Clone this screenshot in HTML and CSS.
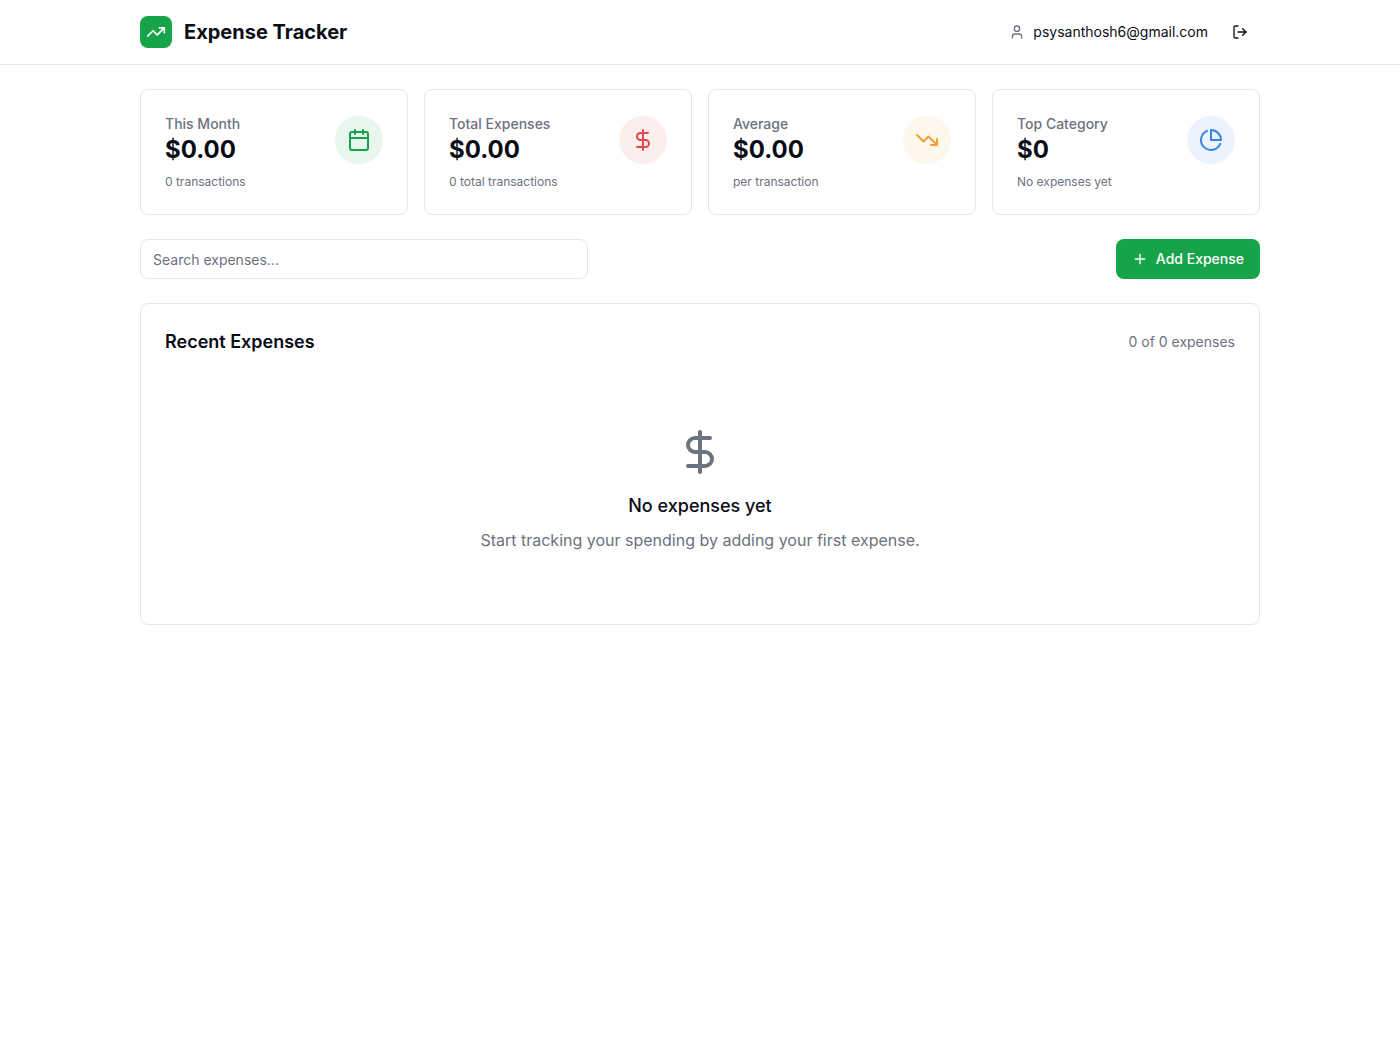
FILE: index.html
```html
<!DOCTYPE html>
<html lang="en">
<head>
<meta charset="utf-8">
<title>Expense Tracker</title>
<link rel="stylesheet" href="styles.css">
</head>
<body>
<header class="header">
  <div class="header-inner">
    <div class="brand">
      <div class="logo">
        <svg class="icon-20" viewBox="0 0 24 24"><polyline points="22 7 13.5 15.5 8.5 10.5 2 17"/><polyline points="16 7 22 7 22 13"/></svg>
      </div>
      <h1 class="title">Expense Tracker</h1>
    </div>
    <div class="user">
      <svg class="icon-16 muted-icon" viewBox="0 0 24 24"><path d="M19 21v-2a4 4 0 0 0-4-4H9a4 4 0 0 0-4 4v2"/><circle cx="12" cy="7" r="4"/></svg>
      <span class="email">psysanthosh6@gmail.com</span>
      <button class="logout" aria-label="Log out">
        <svg class="icon-16" viewBox="0 0 24 24"><path d="M9 21H5a2 2 0 0 1-2-2V5a2 2 0 0 1 2-2h4"/><polyline points="16 17 21 12 16 7"/><line x1="21" y1="12" x2="9" y2="12"/></svg>
      </button>
    </div>
  </div>
</header>
<main class="main">
  <section class="stats">
    <article class="card">
      <div class="card-text">
        <p class="label">This Month</p>
        <p class="value">$0.00</p>
        <p class="note">0 transactions</p>
      </div>
      <div class="badge badge-green">
        <svg class="icon-24" viewBox="0 0 24 24"><rect x="3" y="4" width="18" height="18" rx="2"/><line x1="16" y1="2" x2="16" y2="6"/><line x1="8" y1="2" x2="8" y2="6"/><line x1="3" y1="10" x2="21" y2="10"/></svg>
      </div>
    </article>
    <article class="card">
      <div class="card-text">
        <p class="label">Total Expenses</p>
        <p class="value">$0.00</p>
        <p class="note">0 total transactions</p>
      </div>
      <div class="badge badge-red">
        <svg class="icon-24" viewBox="0 0 24 24"><line x1="12" y1="2" x2="12" y2="22"/><path d="M17 5H9.5a3.5 3.5 0 0 0 0 7h5a3.5 3.5 0 0 1 0 7H6"/></svg>
      </div>
    </article>
    <article class="card">
      <div class="card-text">
        <p class="label">Average</p>
        <p class="value">$0.00</p>
        <p class="note">per transaction</p>
      </div>
      <div class="badge badge-amber">
        <svg class="icon-24" viewBox="0 0 24 24"><polyline points="22 17 13.5 8.5 8.5 13.5 2 7"/><polyline points="16 17 22 17 22 11"/></svg>
      </div>
    </article>
    <article class="card">
      <div class="card-text">
        <p class="label">Top Category</p>
        <p class="value">$0</p>
        <p class="note">No expenses yet</p>
      </div>
      <div class="badge badge-blue">
        <svg class="icon-24" viewBox="0 0 24 24"><path d="M21.21 15.89A10 10 0 1 1 8 2.83"/><path d="M22 12A10 10 0 0 0 12 2v10z"/></svg>
      </div>
    </article>
  </section>
  <section class="toolbar">
    <input class="search" type="text" placeholder="Search expenses...">
    <button class="add">
      <svg class="icon-16" viewBox="0 0 24 24"><path d="M5 12h14"/><path d="M12 5v14"/></svg>
      <span>Add Expense</span>
    </button>
  </section>
  <section class="panel">
    <div class="panel-head">
      <h2 class="panel-title">Recent Expenses</h2>
      <span class="count">0 of 0 expenses</span>
    </div>
    <div class="empty">
      <svg class="icon-48" viewBox="0 0 24 24"><line x1="12" y1="2" x2="12" y2="22"/><path d="M17 5H9.5a3.5 3.5 0 0 0 0 7h5a3.5 3.5 0 0 1 0 7H6"/></svg>
      <h3 class="empty-title">No expenses yet</h3>
      <p class="empty-text">Start tracking your spending by adding your first expense.</p>
    </div>
  </section>
</main>
</body>
</html>
```
FILE: styles.css
```css
* { box-sizing: border-box; }
html, body { margin: 0; padding: 0; }
body {
  background: #fff;
  color: #0a0c16;
  font-family: Inter, "Liberation Sans", sans-serif;
  font-size: 16px;
  line-height: 24px;
}
h1, h2, h3, p { margin: 0; }
svg {
  fill: none;
  stroke: currentColor;
  stroke-width: 2;
  stroke-linecap: round;
  stroke-linejoin: round;
  flex: none;
  display: block;
}
.icon-16 { width: 16px; height: 16px; }
.icon-20 { width: 20px; height: 20px; }
.icon-24 { width: 24px; height: 24px; }
.icon-48 { width: 48px; height: 48px; }

.header { border-bottom: 1px solid #e5e7eb; height: 65px; }
.header-inner {
  width: 1120px;
  height: 64px;
  margin: 0 auto;
  display: flex;
  align-items: center;
  justify-content: space-between;
}
.brand { display: flex; align-items: center; gap: 12px; }
.logo {
  width: 32px;
  height: 32px;
  border-radius: 8px;
  background: #16a34a;
  color: #fff;
  display: flex;
  align-items: center;
  justify-content: center;
}
.title { font-size: 20px; line-height: 28px; font-weight: 700; }
.user { display: flex; align-items: center; }
.muted-icon { color: #6b7280; }
.email { font-size: 14px; line-height: 20px; margin-left: 8px; }
.logout {
  width: 40px;
  height: 40px;
  margin-left: 12px;
  border: 0;
  background: none;
  color: inherit;
  padding: 0;
  display: flex;
  align-items: center;
  justify-content: center;
}

.main { width: 1120px; margin: 0 auto; padding-top: 24px; }
.stats { display: grid; grid-template-columns: repeat(4, 1fr); gap: 16px; }
.card {
  height: 126px;
  border: 1px solid #e5e7eb;
  border-radius: 8px;
  padding: 24px;
  display: flex;
  justify-content: space-between;
  align-items: flex-start;
}
.label { font-size: 14px; line-height: 20px; font-weight: 500; color: #6b7280; }
.value { font-size: 24px; line-height: 32px; font-weight: 700; }
.note { font-size: 12px; line-height: 16px; color: #6b7280; margin-top: 8px; }
.badge {
  width: 48px;
  height: 48px;
  border-radius: 50%;
  display: flex;
  align-items: center;
  justify-content: center;
  margin-top: 2px;
}
.badge-green { background: #e8f6ed; color: #16a34a; }
.badge-red { background: #fdeeee; color: #e5484d; }
.badge-amber { background: #fef7ec; color: #efa231; }
.badge-blue { background: #ecf3fe; color: #3b82e6; }

.toolbar {
  display: flex;
  justify-content: space-between;
  align-items: center;
  margin-top: 24px;
}
.search {
  width: 448px;
  height: 40px;
  border: 1px solid #e5e7eb;
  border-radius: 8px;
  padding: 0 12px;
  font: 14px/20px Inter, "Liberation Sans", sans-serif;
  color: #0a0c16;
  background: #fff;
  outline: none;
}
.search::placeholder { color: #6b7280; opacity: 1; }
.add {
  height: 40px;
  padding: 0 16px;
  border: 0;
  border-radius: 8px;
  background: #16a34a;
  color: #fff;
  font: 500 14px/20px Inter, "Liberation Sans", sans-serif;
  display: flex;
  align-items: center;
  gap: 8px;
}

.panel {
  margin-top: 24px;
  height: 322px;
  border: 1px solid #e5e7eb;
  border-radius: 8px;
  padding: 24px;
}
.panel-head { display: flex; justify-content: space-between; align-items: center; height: 28px; }
.panel-title { font-size: 18px; line-height: 28px; font-weight: 600; }
.count { font-size: 14px; line-height: 20px; color: #6b7280; }
.empty {
  display: flex;
  flex-direction: column;
  align-items: center;
  padding-top: 72px;
  text-align: center;
}
.empty .icon-48 { color: #6b7280; }
.empty-title { font-size: 18px; line-height: 28px; font-weight: 500; margin-top: 16px; }
.empty-text { font-size: 16px; line-height: 24px; color: #6b7280; margin-top: 8px; }
```
